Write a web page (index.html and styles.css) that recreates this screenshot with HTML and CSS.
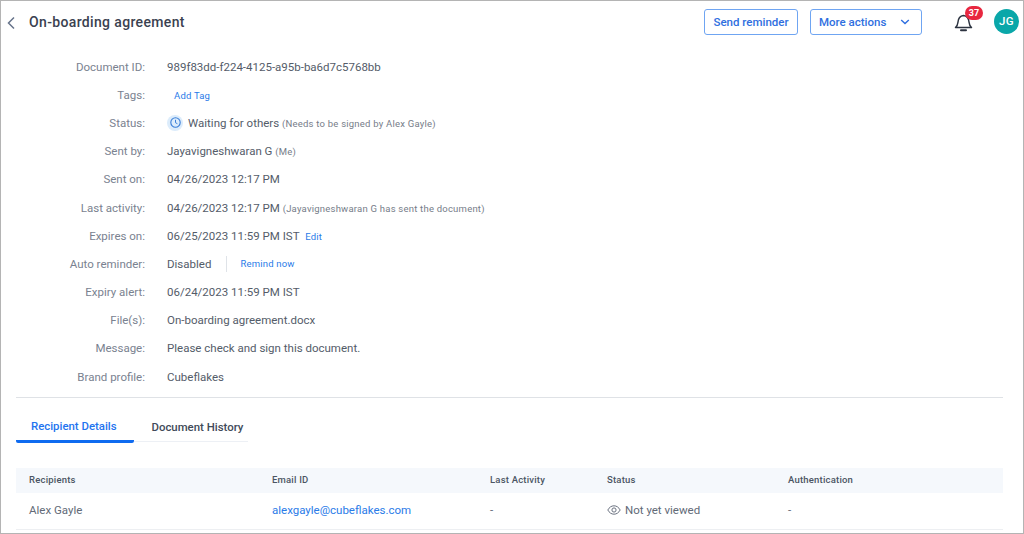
FILE: index.html
```html
<!DOCTYPE html>
<html lang="en">
<head>
<meta charset="utf-8">
<title>On-boarding agreement</title>
<link rel="stylesheet" href="styles.css">
</head>
<body>
<div class="frame">
  <header class="topbar">
    <svg class="back" width="10" height="14" viewBox="0 0 10 14"><path d="M8 1.500 2.500 7 8 12.500" fill="none" stroke="#66738a" stroke-width="1.500"/></svg>
    <h1 class="title">On-boarding agreement</h1>
    <button class="btn btn-send">Send reminder</button>
    <button class="btn btn-more">More actions
      <svg width="10" height="6" viewBox="0 0 10 6"><path d="M1.200 1 5 4.600 8.800 1" fill="none" stroke="#2f6fe0" stroke-width="1.400"/></svg>
    </button>
    <div class="bell">
      <svg width="22" height="24" viewBox="0 0 22 24"><path d="M2.500 17.500c1.600-1.400 2.200-2.800 2.400-5 .3-3.800 1.600-6.600 5.600-7 4 .4 5.300 3.200 5.600 7 .2 2.200.8 3.600 2.400 5z" fill="none" stroke="#2c3340" stroke-width="1.500" stroke-linejoin="round"/><path d="M8 20.300h5" stroke="#2c3340" stroke-width="2" stroke-linecap="round"/></svg>
      <span class="badge">37</span>
    </div>
    <div class="avatar">JG</div>
  </header>

  <dl class="details">
    <div class="row"><dt>Document ID:</dt><dd>989f83dd-f224-4125-a95b-ba6d7c5768bb</dd></div>
    <div class="row"><dt>Tags:</dt><dd><a class="link link-tag">Add Tag</a></dd></div>
    <div class="row"><dt>Status:</dt><dd class="status">
      <span class="clock"><svg width="11" height="11" viewBox="0 0 11 11"><circle cx="5.500" cy="5.500" r="4.700" fill="none" stroke="#3b7fd8" stroke-width="1.100"/><path d="M5.500 2.800v2.900l1.900 1" fill="none" stroke="#3b7fd8" stroke-width="1"/></svg></span>
      <span>Waiting for others <small>(Needs to be signed by Alex Gayle)</small></span></dd></div>
    <div class="row"><dt>Sent by:</dt><dd>Jayavigneshwaran G <small>(Me)</small></dd></div>
    <div class="row"><dt>Sent on:</dt><dd>04/26/2023 12:17 PM</dd></div>
    <div class="row"><dt>Last activity:</dt><dd>04/26/2023 12:17 PM <small>(Jayavigneshwaran G has sent the document)</small></dd></div>
    <div class="row"><dt>Expires on:</dt><dd>06/25/2023 11:59 PM IST <a class="link link-edit">Edit</a></dd></div>
    <div class="row"><dt>Auto reminder:</dt><dd class="reminder"><span>Disabled</span><span class="sep"></span><a class="link">Remind now</a></dd></div>
    <div class="row"><dt>Expiry alert:</dt><dd>06/24/2023 11:59 PM IST</dd></div>
    <div class="row"><dt>File(s):</dt><dd>On-boarding agreement.docx</dd></div>
    <div class="row"><dt>Message:</dt><dd>Please check and sign this document.</dd></div>
    <div class="row"><dt>Brand profile:</dt><dd>Cubeflakes</dd></div>
  </dl>

  <div class="tabs">
    <div class="tab tab-active">Recipient Details</div>
    <div class="tab tab-other">Document History</div>
  </div>

  <div class="table">
    <div class="tr thead">
      <div>Recipients</div><div>Email ID</div><div>Last Activity</div><div>Status</div><div>Authentication</div>
    </div>
    <div class="tr tbody">
      <div>Alex Gayle</div>
      <div class="email">alexgayle@cubeflakes.com</div>
      <div>-</div>
      <div class="viewed"><svg width="14" height="10" viewBox="0 0 14 10"><path d="M.8 5C2.300 2.300 4.400.8 7 .8s4.700 1.500 6.200 4.200C11.700 7.700 9.600 9.200 7 9.200S2.300 7.700.8 5z" fill="none" stroke="#6b7280" stroke-width="1"/><circle cx="7" cy="5" r="2.100" fill="none" stroke="#6b7280" stroke-width="1"/></svg>Not yet viewed</div>
      <div>-</div>
    </div>
  </div>
</div>
</body>
</html>
```
FILE: styles.css
```css
* { box-sizing: border-box; }
html, body { margin: 0; padding: 0; }
body { font-family: Roboto, "Liberation Sans", sans-serif; background: #fff; color: #4b5563; }
.frame { width: 1024px; height: 534px; border: 1px solid #b4b4b4; overflow: hidden; padding: 0 20px 0 15px; }

.topbar { display: flex; align-items: center; height: 41px; margin-right: -16px; }
.back { margin-left: -10px; margin-right: 13px; margin-top: 2px; }
.title { font-size: 14px; font-weight: 500; color: #3a4150; margin: 0; letter-spacing: .35px; flex: 1; }
.btn { height: 26px; border: 1px solid #6fa5f2; border-radius: 3px; background: #fff; color: #2f6fe0; font: 500 11.500px Roboto, sans-serif; padding: 0; display: flex; align-items: center; white-space: nowrap; }
.btn-send { width: 94px; justify-content: center; margin-right: 12px; }
.btn-more { width: 112px; padding-left: 8px; gap: 14px; margin-right: 31px; }
.bell { position: relative; width: 22px; height: 24px; margin-right: 19px; }
.bell svg { display: block; }
.badge { position: absolute; top: -4px; left: 12px; width: 18px; height: 14px; border-radius: 7px; background: #e8273f; color: #fff; font-size: 9px; font-weight: 700; line-height: 14px; text-align: center; }
.avatar { width: 25px; height: 25px; border-radius: 50%; background: #0aa7a9; color: #fff; font-size: 11.500px; font-weight: 500; line-height: 25px; text-align: center; letter-spacing: .3px; }

.details { margin: 10.500px 0 0; }
.row { display: flex; align-items: center; height: 28.200px; }
.row dt { width: 129px; text-align: right; font-size: 11.500px; color: #7a8290; flex: none; }
.row dd { margin: 0 0 0 22px; font-size: 11.500px; color: #545c69; }
small { font-size: 9.500px; color: #767d89; letter-spacing: .22px; }
.link { color: #2a7be8; font-size: 9.500px; letter-spacing: .2px; }
.link-tag { margin-left: 7px; }
.link-edit { margin-left: 3px; }
.status { display: flex; align-items: center; gap: 5px; }
.clock { width: 16px; height: 16px; border-radius: 50%; background: #dcecfb; display: flex; align-items: center; justify-content: center; }
.reminder { display: flex; align-items: center; }
.sep { width: 1px; height: 16px; background: #dfe3e8; margin: 0 13px 0 15px; }

.tabs { display: flex; width: 232px; margin-top: 6.100px; position: relative; height: 71px; }
.tabs::before { content: ""; position: absolute; left: 0; top: 0; width: 987px; height: 1px; background: #dfe2e6; }
.tab { font-size: 11.400px; font-weight: 500; white-space: nowrap; margin-top: 22px; height: 23px; border-bottom: 1px solid #edf0f5; }
.tab-active { width: 118px; padding-left: 15px; color: #1f74ef; border-bottom: 3px solid #0f6bf0; border-radius: 2px; height: 24px; }
.tab-other { width: 114px; padding: 1px 0 0 17.500px; color: #414a59; }

.table { width: 987px; }
.tr { display: grid; grid-template-columns: 243px 218px 117px 181px 1fr; padding-left: 13px; align-items: center; }
.thead { height: 25px; padding-bottom: 2px; background: #f5f8fc; font-size: 9.500px; font-weight: 500; color: #4b5563; letter-spacing: .2px; }
.tbody { height: 37px; padding-bottom: 2px; font-size: 11.500px; color: #626a77; border-bottom: 1px solid #edeff2; }
.email { color: #2a7be8; }
.viewed { display: flex; align-items: center; gap: 4px; }
```
